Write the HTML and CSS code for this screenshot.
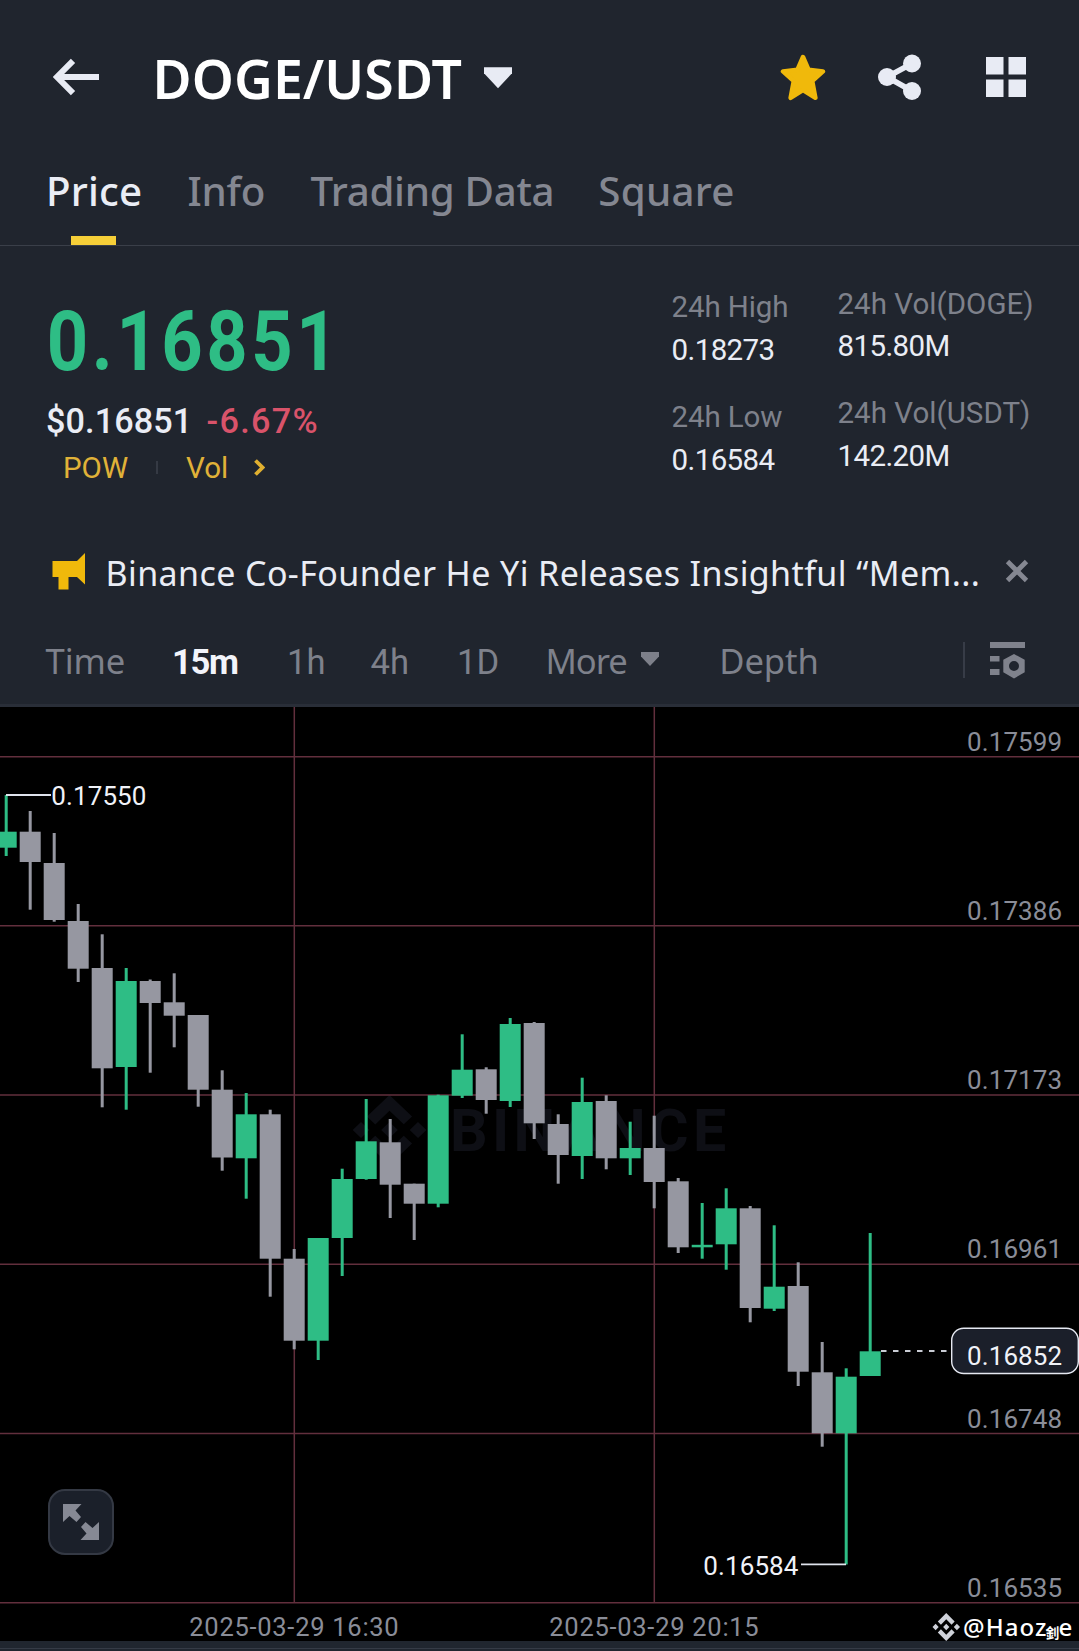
FILE: index.html
```html
<!DOCTYPE html>
<html lang="en">
<head>
<meta charset="utf-8">
<title>DOGE/USDT</title>
<link rel="stylesheet" href="styles.css">
</head>
<body>
<header class="header">
  <svg class="back" width="46" height="54" viewBox="0 0 46 54"><path d="M20 10.8 4 27l16 16.2M4 27h42" fill="none" stroke="#e8ebf4" stroke-width="6"/></svg>
  <h1 class="pair">DOGE/USDT</h1>
  <svg class="pair-caret" width="28" height="54" viewBox="0 0 28 54"><path d="M0 17.3h28v6L14 38.3 0 23.3z" fill="#e8ebf4"/></svg>
  <div class="actions">
    <svg width="46" height="54" viewBox="0 0 46 54"><path d="M23 7l5.6 12.8 14.4 1.6-10.8 9.6 3.2 16.8L23 40.2 10.6 47.8 13.8 31 3 21.400l14.400-1.600z" fill="#f0b90b" stroke="#f0b90b" stroke-width="4.500" stroke-linejoin="round"/></svg>
    <svg width="43" height="54" viewBox="0 0 43 54"><g fill="#e8ebf4"><ellipse cx="9" cy="27" rx="9" ry="9"/><circle cx="34" cy="13.500" r="9"/><circle cx="34" cy="41" r="9"/></g><path d="M34 13.500 9 27l25 14" fill="none" stroke="#e8ebf4" stroke-width="5.500"/></svg>
    <svg class="grid-icon" width="40" height="54" viewBox="0 0 40 54"><path d="M0 7h17.500v17.500H0zM22.500 7H40v17.500H22.500zM0 29.500h17.500V47H0zM22.500 29.500H40V47H22.500z" fill="#e8ebf4"/></svg>
  </div>
</header>

<nav class="tabs">
  <a class="tab tab-active">Price</a>
  <a class="tab tab-info">Info</a>
  <a class="tab tab-trading">Trading Data</a>
  <a class="tab tab-square">Square</a>
</nav>

<section class="summary">
  <div class="quote">
    <div class="last">0.16851</div>
    <div class="fiat"><span class="usd">$0.16851</span><span class="change">-6.67%</span></div>
    <div class="tags">
      <span>POW</span><i class="tag-sep"></i><span>Vol</span>
      <svg class="chevron" width="11" height="17" viewBox="0 0 11 17"><path d="M1.500 1.500 8.500 8.500l-7 7" fill="none" stroke="#e0b030" stroke-width="3.800"/></svg>
    </div>
  </div>
  <dl class="stats">
    <dt>24h High</dt><dd>0.18273</dd>
    <dt>24h Low</dt><dd>0.16584</dd>
  </dl>
  <dl class="stats stats-volume">
    <dt>24h Vol(DOGE)</dt><dd>815.80M</dd>
    <dt>24h Vol(USDT)</dt><dd>142.20M</dd>
  </dl>
</section>

<section class="news">
  <svg width="33" height="38" viewBox="0 0 33 38"><path d="M.500 8h24.500L33 0v31.500L25 24h-8.500v12.500H6.500V24h-6z" fill="#f0b90b"/></svg>
  <p class="headline">Binance Co-Founder He Yi Releases Insightful “Mem...</p>
  <svg width="24" height="24" viewBox="0 0 24 24"><path d="M2.500 2.500l19 19M21.500 2.500l-19 19" stroke="#858892" stroke-width="4.800"/></svg>
</section>

<div class="intervals">
  <span class="word">Time</span><span class="on">15m</span><span>1h</span><span>4h</span><span>1D</span>
  <span class="word more">More<svg width="18" height="14" viewBox="0 0 18 14"><path d="M0 0h18v4.500L9 14 0 4.500z" fill="#7d808a"/></svg></span>
  <span class="word">Depth</span>
  <i class="sep"></i>
  <svg class="settings" width="35" height="37" viewBox="0 0 35 37"><path d="M0 0h35v6H0zM0 14h9.500v5.500H0zM0 27h9.500v6H0z" fill="#7f828c"/><path fill-rule="evenodd" d="M24 12l10.700 5.800v12.400L24 36.500l-10.700-6.300V17.800zM24 19a5 5 0 1 0 0 10 5 5 0 1 0 0-10z" fill="#7f828c"/></svg>
</div>

<main class="chart">
  <svg id="plot" width="1079" height="934" viewBox="0 707 1079 934">
    <g class="brand">
      <path transform="translate(352.700 1095) scale(3.070 2.920)" d="M16.624 13.920l2.718 2.715-7.353 7.353-7.353-7.352 2.717-2.716 4.636 4.659 4.635-4.659zm4.637-4.636L24 12l-2.715 2.716L18.568 12l2.693-2.716zm-9.272 0l2.716 2.692-2.717 2.717L9.272 12l2.717-2.715zm-9.273 0L5.409 12l-2.692 2.692L0 12l2.716-2.716zM11.989.012l7.353 7.329-2.718 2.715-4.635-4.635-4.636 4.659-2.717-2.715z"/>
      <text x="450" y="1151">BINANCE</text>
    </g>
    <path class="gridlines" d="M0 756.700H1079M0 925.700H1079M0 1095H1079M0 1264.300H1079M0 1433.600H1079M0 1602.700H1079M294.300 707V1602.700M654.300 707V1602.700"/>
    <g id="candles"></g>
    <path class="leader" d="M6 795H51M801 1564.300H846"/>
    <path class="last-line" d="M881 1351H948"/>
    <text class="mark" x="51.300" y="805">0.17550</text>
    <text class="mark" x="703.300" y="1574.700">0.16584</text>
    <g class="axis">
      <text x="967" y="750.700">0.17599</text>
      <text x="967" y="919.800">0.17386</text>
      <text x="967" y="1089">0.17173</text>
      <text x="967" y="1258">0.16961</text>
      <text x="967" y="1427.700">0.16748</text>
      <text x="967" y="1596.700">0.16535</text>
      <text class="date" x="189.300" y="1635.700">2025-03-29 16:30</text>
      <text class="date" x="549.300" y="1635.700">2025-03-29 20:15</text>
    </g>
    <rect class="price-tag" x="951.700" y="1328.300" width="126.600" height="45.200" rx="12"/>
    <text class="mark" x="967" y="1364.700">0.16852</text>
    <g class="expand">
      <rect x="49" y="1490" width="64" height="64" rx="16"/>
      <path d="M63 1504h18.500l-6 6.500 5.500 6.500-4.500 5-7-6-6.500 6zM99 1540H80.500l6-6.500-5.500-6.500 4.500-5 7 6 6.500-6z"/>
    </g>
    <g class="handle">
      <path transform="translate(932.500 1613) scale(1.146 1.170)" d="M16.624 13.920l2.718 2.715-7.353 7.353-7.353-7.352 2.717-2.716 4.636 4.659 4.635-4.659zm4.637-4.636L24 12l-2.715 2.716L18.568 12l2.693-2.716zm-9.272 0l2.716 2.692-2.717 2.717L9.272 12l2.717-2.715zm-9.273 0L5.409 12l-2.692 2.692L0 12l2.716-2.716zM11.989.012l7.353 7.329-2.718 2.715-4.635-4.635-4.636 4.659-2.717-2.715z"/>
      <text x="963" y="1635.700">@Haoz</text>
      <text class="glyph" x="1045.500" y="1638">釗</text>
      <text x="1058.500" y="1635.700">e</text>
    </g>
  </svg>
</main>
<footer class="footer"></footer>
<script src="chart.js"></script>
</body>
</html>
```
FILE: styles.css
```css
* { box-sizing: border-box; margin: 0; padding: 0; }
body {
  width: 1079px;
  background: #20252e;
  color: #eaedf5;
  font-family: Roboto, "Liberation Sans", sans-serif;
}
svg { display: block; flex: none; }

.header { display: flex; height: 110px; padding: 50px 53.5px 0 52.5px; }
.pair { margin-left: 54px; font-family: "Noto Sans", sans-serif; font-size: 53.5px; line-height: 57px; font-weight: 600; letter-spacing: .1px; color: #fff; white-space: nowrap; }
.pair-caret { margin-left: 22px; }
.actions { display: flex; gap: 51.7px; margin-left: auto; }
.grid-icon { margin-left: 13px; }

.tabs {
  display: grid;
  grid-template-columns: 141.4px 123px 287.9px auto;
  height: 136px;
  padding: 57px 0 0 46px;
  border-bottom: 1px solid #3a3f49;
  font-family: "Noto Sans", sans-serif;
  font-size: 40.3px;
  line-height: 48px;
  font-weight: 500;
  color: #848791;
}
.tab-active { color: #eaedf5; letter-spacing: .2px; }
.tab-active::after { content: ""; display: block; width: 45px; height: 9px; margin: 21px 0 0 25px; background: #f6cf38; }
.tab-info { letter-spacing: -.2px; }
.tab-trading { letter-spacing: -.3px; }
.tab-square { letter-spacing: .26px; }

.summary { display: flex; height: 307px; padding: 0 0 0 46px; }
.quote { width: 625.5px; padding-top: 56px; }
.last { font-size: 83px; line-height: 80px; font-weight: 700; letter-spacing: 4.1px; color: #2ebd85; padding-left: 1px; transform: scaleX(.87); transform-origin: left; }
.fiat { display: flex; margin-top: 19px; font-size: 34.2px; line-height: 40px; font-weight: 500; letter-spacing: .1px; }
.usd { width: 160.5px; }
.change { color: #d9536a; letter-spacing: 1.3px; }
.tags { display: flex; margin-top: 9px; padding-left: 17px; font-size: 29.5px; line-height: 36px; color: #e0b238; }
.tag-sep { width: 2px; height: 13px; margin: 11px 28px 0 28px; background: #353a44; }
.chevron { margin: 9px 0 0 26px; }
.stats { width: 166px; padding-top: 43px; font-size: 29.5px; line-height: 36px; white-space: nowrap; }
.stats-volume { width: 220px; padding-top: 39.5px; }
.stats dt { color: #7e818b; letter-spacing: -.1px; }
.stats-volume dt { letter-spacing: .03px; }
.stats dd { margin: 6.8px 0 31px; letter-spacing: -.6px; }

.news { display: flex; align-items: flex-start; height: 89px; padding-left: 52px; }
.headline { width: 899.5px; margin-left: 20.5px; font-family: "Noto Sans", sans-serif; font-size: 34px; line-height: 40px; letter-spacing: .4px; white-space: nowrap; }
.news svg:last-child { margin-top: 6px; }

.intervals {
  display: grid;
  grid-template-columns: 126.5px 115px 83.5px 86.5px 88.5px 173.800px 244.200px 27px auto;
  height: 65px;
  padding-left: 45.5px;
  border-bottom: 3px solid #292e38;
  font-size: 34.6px;
  line-height: 40px;
  letter-spacing: .15px;
  color: #7e818b;
}
.on { color: #f2f4fa; font-weight: 700; letter-spacing: -1.3px; }
.word { font-family: "Noto Sans", sans-serif; line-height: 37px; letter-spacing: -.1px; }
.more { display: flex; gap: 14.5px; letter-spacing: -1px; }
.more svg { margin-top: 10px; }
.sep { width: 2px; height: 36px; background: #373c47; }

.chart { height: 934px; background: #000; }
#plot { overflow: visible; }
.brand { fill: #0e0f15; }
.brand text { font-size: 59px; font-weight: 700; letter-spacing: 4.35px; }
.gridlines { fill: none; stroke: #622f3d; stroke-width: 1.5; }
.up { fill: #2ebd85; }
.down { fill: #9697a1; }
.leader { stroke: #dfe3ec; stroke-width: 1.8; }
.last-line { stroke: #c9ccd4; stroke-width: 1.800; stroke-dasharray: 5.500 6.500; }
.mark { fill: #f0f2f8; font-size: 26px; letter-spacing: .1px; }
.axis { fill: #8a8d98; font-size: 26px; letter-spacing: .1px; }
.date { font-size: 25.5px; letter-spacing: .72px; }
.price-tag { fill: #1b1f2a; stroke: #e6e9f2; stroke-width: 1.400; }
.expand rect { fill: #1b202a; stroke: #343944; stroke-width: 2; }
.expand path { fill: #868994; }
.handle { fill: #fff; font: 500 24px "Noto Sans", sans-serif; letter-spacing: 1.08px; }
.handle path { fill: #cfd2da; }
.handle .glyph { font: 700 14px "Noto Sans CJK SC", sans-serif; letter-spacing: 0; }

.footer { height: 10px; background: linear-gradient(#20262f 0 7px, #353b46 7px 8px, #20262f 8px); }
```
FILE: chart.js
```js
// Each candle: direction, then y of high, body top, body bottom, low.
const candles = [
  ['up', 795, 831.7, 847.7, 856], ['down', 811, 831.7, 862, 909.7],
  ['down', 833, 863, 920, 921.7], ['down', 904, 921, 968.7, 982],
  ['down', 934.3, 968, 1068.3, 1107.3], ['up', 968, 981, 1067, 1109.7],
  ['down', 979.5, 981, 1003, 1072.7], ['down', 973.3, 1002.3, 1015.7, 1047.3],
  ['down', 1015, 1015, 1089.7, 1106.7], ['down', 1070.3, 1089.7, 1157.5, 1170.7],
  ['up', 1093, 1114.3, 1158.3, 1198.7], ['down', 1109.7, 1114.3, 1258.7, 1296.7],
  ['down', 1249, 1258.7, 1340.7, 1349.3], ['up', 1238, 1238, 1340.7, 1360],
  ['up', 1168.7, 1179, 1238, 1276], ['up', 1099, 1141.3, 1179, 1179.7],
  ['down', 1119, 1142.3, 1184.7, 1218], ['down', 1183.7, 1183.7, 1203.7, 1240],
  ['up', 1094.7, 1095.3, 1203.7, 1207.3], ['up', 1034.3, 1069.7, 1095.7, 1098],
  ['down', 1067.3, 1069.3, 1100, 1113.7], ['up', 1018, 1024, 1101, 1107],
  ['down', 1022, 1023, 1123.3, 1139], ['down', 1114.3, 1124, 1155, 1183.7],
  ['up', 1077.7, 1102, 1156, 1179], ['down', 1095.3, 1101, 1158.3, 1169.3],
  ['up', 1121.7, 1148, 1158.3, 1175], ['down', 1115.7, 1148, 1182, 1208.3],
  ['down', 1178, 1181.3, 1247.3, 1253], ['up', 1203, 1244.8, 1247.3, 1258.7],
  ['up', 1188.3, 1208.3, 1244.3, 1269.7], ['down', 1206, 1208.3, 1308, 1322.3],
  ['up', 1225.3, 1286.7, 1308.7, 1311], ['down', 1262.3, 1286, 1371.7, 1386],
  ['down', 1342, 1372.3, 1433.3, 1446.7], ['up', 1368.3, 1376.7, 1433.3, 1564.5],
  ['up', 1233, 1351.3, 1376, 1376],
];
const NS = 'http://www.w3.org/2000/svg';
const layer = document.getElementById('candles');
function bar(cls, x, y, w, h) {
  const r = document.createElementNS(NS, 'rect');
  r.setAttribute('class', cls);
  r.setAttribute('x', x);
  r.setAttribute('y', y);
  r.setAttribute('width', w);
  r.setAttribute('height', h);
  layer.appendChild(r);
}
candles.forEach(([dir, high, top, bottom, low], i) => {
  const cx = 6.2 + 24 * i;
  bar(dir, cx - 1.5, high, 3, low - high);
  bar(dir, cx - 10.5, top, 21, bottom - top);
});
```
